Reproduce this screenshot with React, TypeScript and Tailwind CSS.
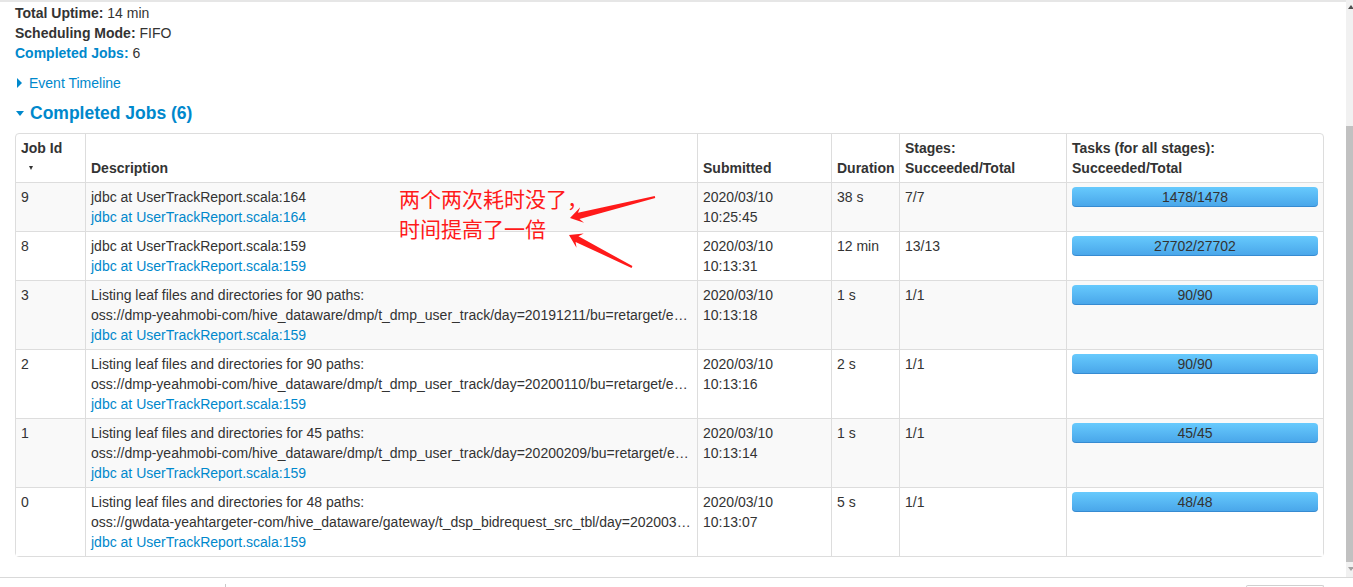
import React from "react";

type Row = {
  id: number;
  lines: string[];
  link: string;
  sub: [string, string];
  dur: string;
  stages: string;
  tasks: string;
};

const rows: Row[] = [
  {
    id: 9,
    lines: ["jdbc at UserTrackReport.scala:164"],
    link: "jdbc at UserTrackReport.scala:164",
    sub: ["2020/03/10", "10:25:45"],
    dur: "38 s",
    stages: "7/7",
    tasks: "1478/1478",
  },
  {
    id: 8,
    lines: ["jdbc at UserTrackReport.scala:159"],
    link: "jdbc at UserTrackReport.scala:159",
    sub: ["2020/03/10", "10:13:31"],
    dur: "12 min",
    stages: "13/13",
    tasks: "27702/27702",
  },
  {
    id: 3,
    lines: [
      "Listing leaf files and directories for 90 paths:",
      "oss://dmp-yeahmobi-com/hive_dataware/dmp/t_dmp_user_track/day=20191211/bu=retarget/e…",
    ],
    link: "jdbc at UserTrackReport.scala:159",
    sub: ["2020/03/10", "10:13:18"],
    dur: "1 s",
    stages: "1/1",
    tasks: "90/90",
  },
  {
    id: 2,
    lines: [
      "Listing leaf files and directories for 90 paths:",
      "oss://dmp-yeahmobi-com/hive_dataware/dmp/t_dmp_user_track/day=20200110/bu=retarget/e…",
    ],
    link: "jdbc at UserTrackReport.scala:159",
    sub: ["2020/03/10", "10:13:16"],
    dur: "2 s",
    stages: "1/1",
    tasks: "90/90",
  },
  {
    id: 1,
    lines: [
      "Listing leaf files and directories for 45 paths:",
      "oss://dmp-yeahmobi-com/hive_dataware/dmp/t_dmp_user_track/day=20200209/bu=retarget/e…",
    ],
    link: "jdbc at UserTrackReport.scala:159",
    sub: ["2020/03/10", "10:13:14"],
    dur: "1 s",
    stages: "1/1",
    tasks: "45/45",
  },
  {
    id: 0,
    lines: [
      "Listing leaf files and directories for 48 paths:",
      "oss://gwdata-yeahtargeter-com/hive_dataware/gateway/t_dsp_bidrequest_src_tbl/day=202003…",
    ],
    link: "jdbc at UserTrackReport.scala:159",
    sub: ["2020/03/10", "10:13:07"],
    dur: "5 s",
    stages: "1/1",
    tasks: "48/48",
  },
];

function arrowPoints(tx: number, ty: number, px: number, py: number): string {
  const dx = px - tx;
  const dy = py - ty;
  const L = Math.hypot(dx, dy);
  const ux = dx / L;
  const uy = dy / L;
  const nx = -uy;
  const ny = ux;
  const pt = (a: number, w: number) =>
    `${(tx + ux * a + nx * w).toFixed(2)},${(ty + uy * a + ny * w).toFixed(2)}`;
  return [
    pt(0, 1),
    pt(L - 9, 3.2),
    pt(L - 12.5, 8),
    pt(L, 0),
    pt(L - 12.5, -8),
    pt(L - 9, -3.2),
    pt(0, -1),
  ].join(" ");
}

const th = "border-l border-[#ddd] px-[5px] py-[4px] text-left align-bottom font-bold";
const td = "border-l border-t border-[#ddd] px-[5px] py-[4px] align-top";

export default function App() {
  return (
    <div className="relative h-[587px] w-[1353px] overflow-hidden bg-white font-['Liberation_Sans',Arial,sans-serif] text-[14px] leading-[20px] text-[#333]">
      <div className="flex h-[577px]">
        <div className="min-w-0 flex-1 border-t-2 border-[#e6e6e6] pl-[15px] pr-[22px] pt-px">
          <ul className="mb-[10px]">
            <li>
              <strong>Total Uptime:</strong> 14 min
            </li>
            <li>
              <strong>Scheduling Mode:</strong> FIFO
            </li>
            <li>
              <a className="font-bold text-[#0088cc]">Completed Jobs:</a> 6
            </li>
          </ul>
          <div className="flex items-center text-[#0088cc]">
            <span className="ml-[2px] mr-[7px] inline-block h-0 w-0 border-y-[5px] border-l-[5px] border-y-transparent border-l-[#0088cc]" />
            <span>Event Timeline</span>
          </div>
          <h4 className="my-[10px] flex items-center text-[17.5px] font-bold leading-[20px] text-[#0088cc]">
            <span className="ml-px mr-[6px] inline-block h-0 w-0 border-x-[4.5px] border-t-[5px] border-x-transparent border-t-[#0088cc]" />
            <span>Completed Jobs (6)</span>
          </h4>
          <table className="w-[1309px] table-fixed border-separate border-spacing-0 rounded-[4px] border border-[#ddd]">
            <colgroup>
              <col className="w-[69px]" />
              <col className="w-[612px]" />
              <col className="w-[134px]" />
              <col className="w-[68px]" />
              <col className="w-[167px]" />
              <col className="w-[257px]" />
            </colgroup>
            <thead>
              <tr>
                <th className="border-l-0 px-[5px] py-[4px] text-left align-bottom font-bold">
                  <div>Job Id</div>
                  <div className="flex h-[20px] items-center pl-[8px]">
                    <span className="inline-block h-0 w-0 border-x-[2.5px] border-t-[4px] border-x-transparent border-t-[#333]" />
                  </div>
                </th>
                <th className={th}>Description</th>
                <th className={th}>Submitted</th>
                <th className={th}>Duration</th>
                <th className={th}>Stages: Succeeded/Total</th>
                <th className={th}>Tasks (for all stages): Succeeded/Total</th>
              </tr>
            </thead>
            <tbody>
              {rows.map((r, i) => (
                <tr key={r.id} className={i % 2 === 0 ? "bg-[#f9f9f9]" : "bg-white"}>
                  <td className="border-t border-[#ddd] px-[5px] py-[4px] align-top">{r.id}</td>
                  <td className={td}>
                    {r.lines.map((l, k) => (
                      <div key={k} className="whitespace-nowrap">
                        {l}
                      </div>
                    ))}
                    <div className="text-[#0088cc]">{r.link}</div>
                  </td>
                  <td className={td}>
                    <div>{r.sub[0]}</div>
                    <div>{r.sub[1]}</div>
                  </td>
                  <td className={td}>{r.dur}</td>
                  <td className={td}>{r.stages}</td>
                  <td className={td}>
                    <div className="h-[20px] rounded-[4px] bg-linear-to-b from-[#67cafd] to-[#48a5e9] text-center leading-[20px] text-[#333] shadow-[inset_0_-1px_0_rgba(0,60,140,0.25)]">
                      {r.tasks}
                    </div>
                  </td>
                </tr>
              ))}
            </tbody>
          </table>
        </div>
        <div className="relative flex h-[577px] w-[7px] flex-col bg-[#f1f1f1] pt-[126px]">
          <div className="h-[436px] w-full bg-[#c1c1c1]" />
          <span className="absolute right-[-1px] top-[5px] h-0 w-0 border-x-[3px] border-b-[4px] border-x-transparent border-b-[#505050]" />
          <span className="absolute bottom-[6px] right-[-1px] h-0 w-0 border-x-[3px] border-t-[4px] border-x-transparent border-t-[#a3a3a3]" />
        </div>
      </div>
      <div className="flex h-[10px] items-end border-t border-[#d9d9d9]">
        <div className="w-[225px]" />
        <div className="h-[3px] w-px bg-[#c8c8c8]" />
        <div className="flex-1" />
        <div className="h-[2px] w-[78px] rounded-t-[3px] border border-b-0 border-[#cfcfcf]" />
        <div className="w-[29px]" />
      </div>

      <div className="pointer-events-none absolute left-[399px] top-[183px] font-['Noto_Sans_CJK_SC',sans-serif] text-[21px] leading-[30px] text-[#ff1a1a]">
        <div>两个两次耗时没了，</div>
        <div>时间提高了一倍</div>
      </div>
      <svg
        className="pointer-events-none absolute left-0 top-0"
        width={1353}
        height={587}
        viewBox="0 0 1353 587"
      >
        <polygon points={arrowPoints(655, 197, 570, 218)} fill="#ff1a1a" />
        <polygon points={arrowPoints(632, 267, 569, 235)} fill="#ff1a1a" />
      </svg>
    </div>
  );
}
